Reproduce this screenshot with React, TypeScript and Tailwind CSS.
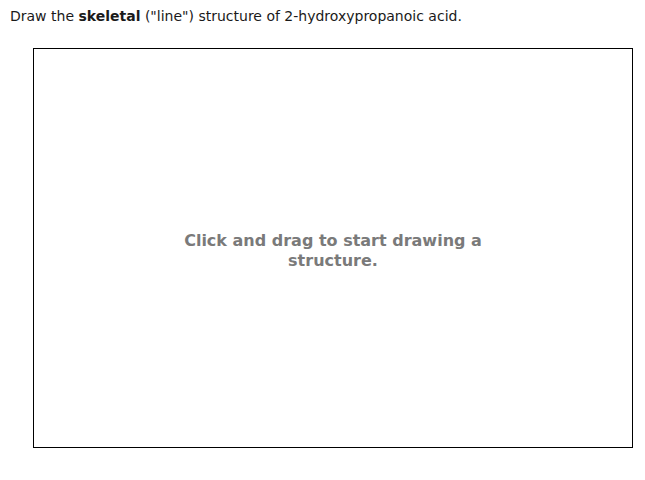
export default function App() {
  return (
    <div className="min-h-screen bg-white font-['DejaVu_Sans',Verdana,sans-serif] text-black">
      <p className="px-[10px] pt-[8px] text-[14px] leading-[16px] text-[#1a1a1a]">
        Draw the <b>skeletal</b> ("line") structure of 2-hydroxypropanoic acid.
      </p>
      <div className="ml-[33px] mt-[24px] flex h-[400px] w-[600px] items-center justify-center border border-black">
        <p className="w-[320px] pt-[6px] text-center text-[16px] font-bold leading-[20px] text-[#7a7a7a]">
          Click and drag to start drawing a structure.
        </p>
      </div>
    </div>
  );
}
